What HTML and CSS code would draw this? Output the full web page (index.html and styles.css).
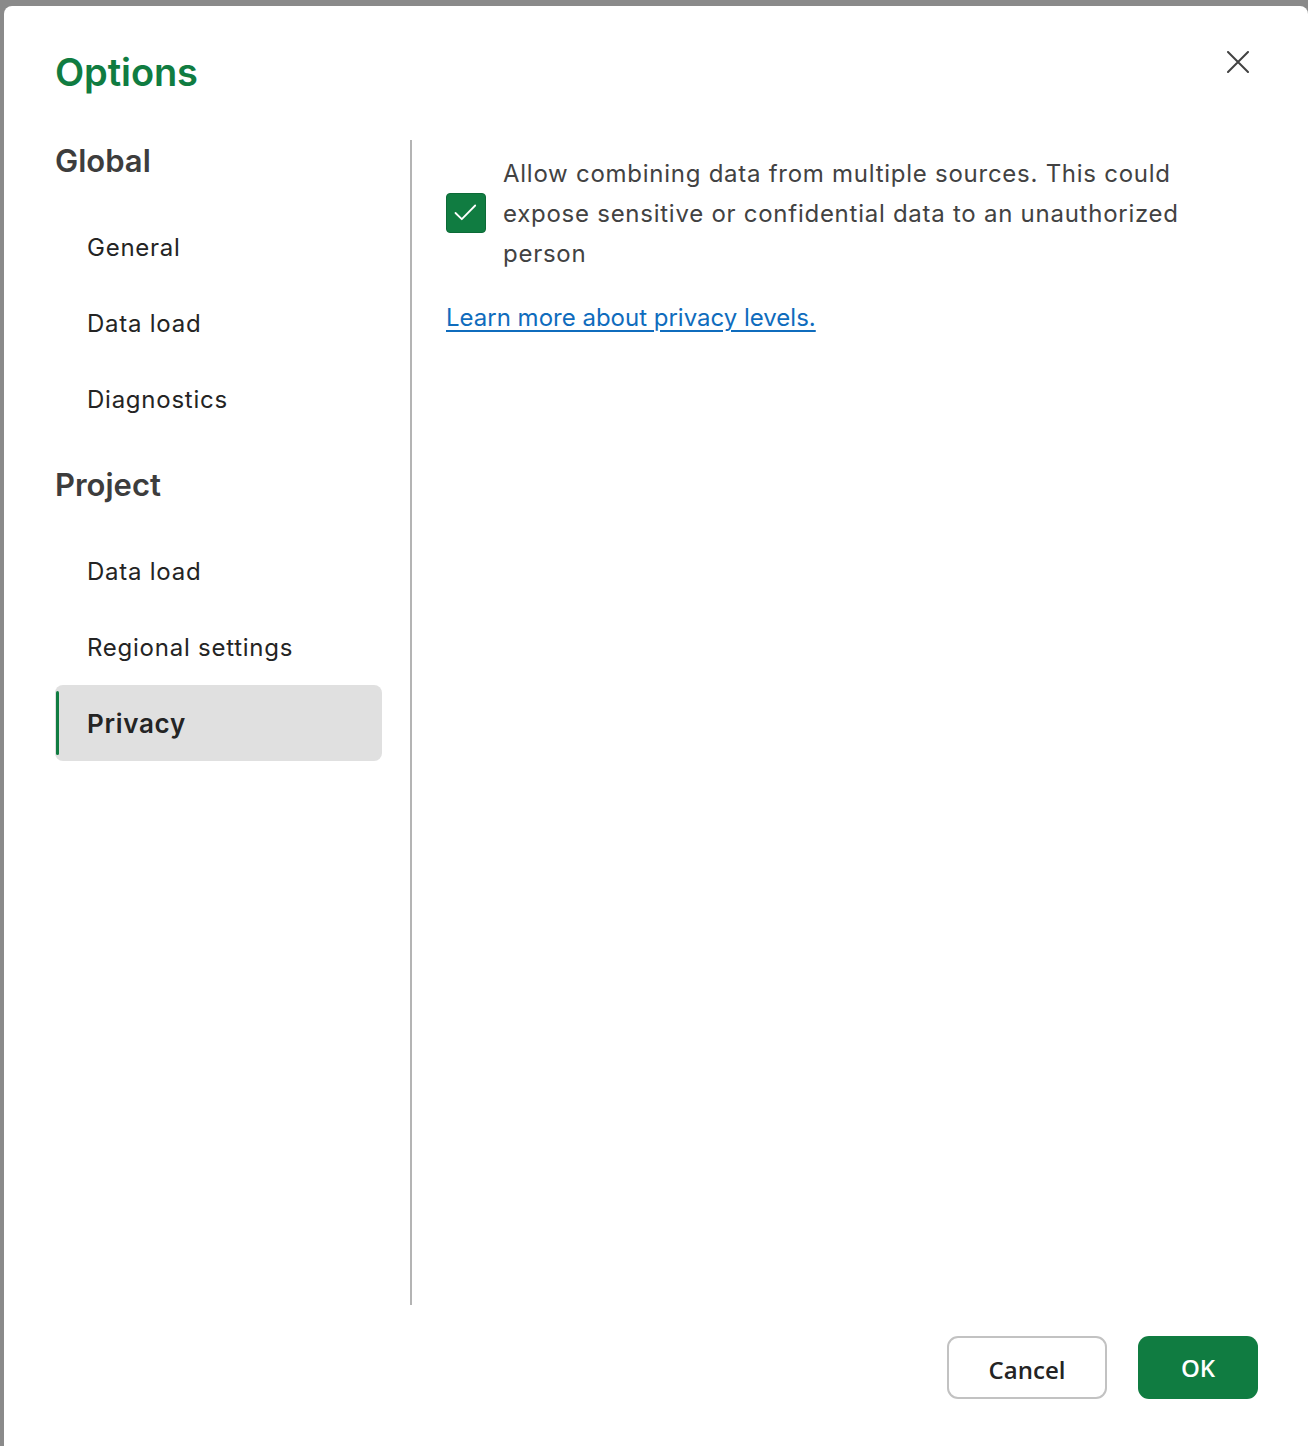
FILE: index.html
```html
<!DOCTYPE html>
<html lang="en">
<head>
<meta charset="utf-8">
<title>Options</title>
<link rel="stylesheet" href="styles.css">
</head>
<body>
<div class="dialog">
  <header class="dialog-header">
    <h1 class="title">Options</h1>
    <button class="close" aria-label="Close">
      <svg width="22" height="22" viewBox="0 0 22 22"><path d="M1 1 L21 21 M21 1 L1 21" stroke="#424242" stroke-width="2" fill="none" stroke-linecap="round"/></svg>
    </button>
  </header>
  <div class="dialog-body">
    <nav class="nav">
      <div class="nav-heading">Global</div>
      <div class="nav-item">General</div>
      <div class="nav-item">Data load</div>
      <div class="nav-item">Diagnostics</div>
      <div class="nav-heading second">Project</div>
      <div class="nav-item">Data load</div>
      <div class="nav-item">Regional settings</div>
      <div class="nav-item selected">Privacy</div>
    </nav>
    <div class="divider"></div>
    <main class="content">
      <label class="check-row">
        <span class="checkbox">
          <svg width="40" height="40" viewBox="0 0 40 40"><path d="M9.5 20 L15.8 26.2 L29.2 12.5" stroke="#ffffff" stroke-width="1.8" fill="none" stroke-linecap="round" stroke-linejoin="round"/></svg>
        </span>
        <span class="check-text">Allow combining data from multiple sources. This could expose sensitive or confidential data to an unauthorized person</span>
      </label>
      <a class="link" href="#">Learn more about privacy levels.</a>
    </main>
  </div>
  <footer class="dialog-footer">
    <button class="btn btn-secondary">Cancel</button>
    <button class="btn btn-primary">OK</button>
  </footer>
</div>
</body>
</html>
```
FILE: styles.css
```css
* { box-sizing: border-box; }
html, body { margin: 0; padding: 0; }
body {
  background: #8a8a8a;
  font-family: Inter, "Noto Sans", sans-serif;
  height: 1446px;
  overflow: hidden;
}
.dialog {
  margin: 6px 0 0 4px;
  width: 1304px;
  height: 1440px;
  background: #ffffff;
  border-radius: 8px 8px 0 0;
  display: flex;
  flex-direction: column;
}
.dialog-header {
  display: flex;
  justify-content: space-between;
  align-items: flex-start;
  padding: 42px 51px 0 51px;
  height: 131px;
}
.title {
  margin: 0;
  font-size: 38px;
  line-height: 48px;
  font-weight: 600;
  color: #107c41;
  letter-spacing: -0.1px;
}
.close {
  width: 38px;
  height: 38px;
  margin-top: -5px;
  padding: 0;
  border: none;
  background: transparent;
  display: flex;
  align-items: center;
  justify-content: center;
}
.dialog-body {
  display: flex;
  height: 1168px;
  padding-left: 51px;
}
.nav {
  width: 327px;
  display: flex;
  flex-direction: column;
}
.nav-heading {
  height: 48px;
  line-height: 48px;
  font-size: 31px;
  font-weight: 600;
  color: #3d3d3d;
  margin-bottom: 24px;
}
.nav-heading.second { margin-top: 24px; }
.nav-item {
  height: 76px;
  line-height: 77px;
  padding-left: 32px;
  font-size: 24px;
  letter-spacing: 0.75px;
  color: #242424;
  border-radius: 8px;
  position: relative;
}
.nav-item.selected {
  background: #e0e0e0;
  font-weight: 600;
  font-size: 26px;
  letter-spacing: 0.7px;
}
.nav-item.selected::before {
  content: "";
  position: absolute;
  left: 1px;
  top: 6px;
  bottom: 6px;
  width: 3px;
  border-radius: 2px;
  background: #107c41;
}
.divider {
  width: 2px;
  margin: 3px 0 0 28px;
  background: #b4b4b4;
}
.content {
  flex: 1;
  padding: 16px 60px 0 34px;
}
.check-row {
  display: flex;
  align-items: center;
  gap: 17px;
}
.checkbox {
  flex: none;
  width: 40px;
  height: 40px;
  margin-top: -2px;
  border-radius: 4px;
  background: #107c41;
  border: 1px solid #0c6a37;
  display: flex;
  align-items: center;
  justify-content: center;
}
.checkbox svg { display: block; margin: -1px; }
.check-text {
  font-size: 24px;
  line-height: 40px;
  letter-spacing: 0.74px;
  color: #424242;
  max-width: 720px;
  padding-top: 1px;
}
.link {
  display: inline-block;
  margin-top: 24px;
  font-size: 24px;
  line-height: 40px;
  color: #0f6cbd;
  text-decoration: underline;
  text-underline-offset: 4px;
  text-decoration-thickness: 2px;
}
.dialog-footer {
  display: flex;
  justify-content: flex-end;
  gap: 31px;
  padding: 31px 50px 0 0;
}
.btn {
  height: 63px;
  font-family: "Open Sans", "Noto Sans", sans-serif;
  font-size: 24px;
  font-weight: 600;
  border-radius: 11px;
  padding: 0;
  line-height: 63px;
}
.btn-secondary {
  width: 160px;
  background: #ffffff;
  border: 2px solid #c2c2c2;
  color: #242424;
}
.btn-primary {
  width: 120px;
  background: #107c41;
  border: none;
  color: #ffffff;
}
```
